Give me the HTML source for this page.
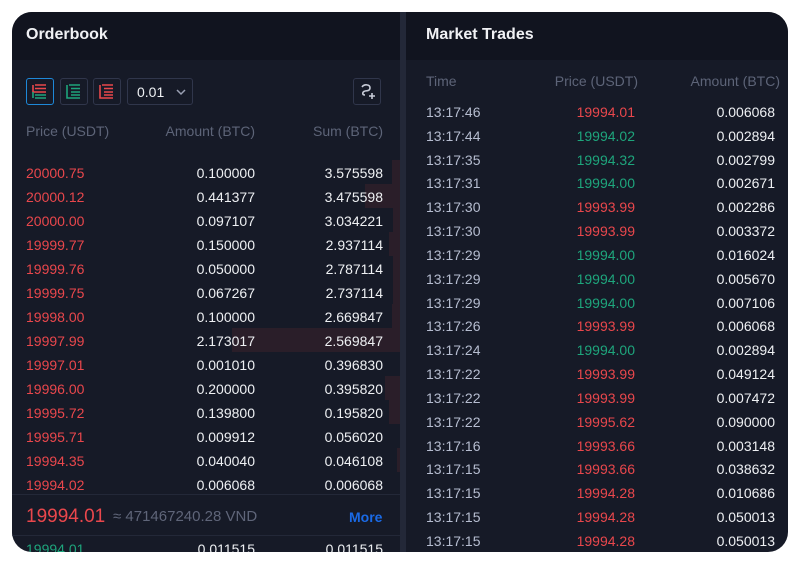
<!DOCTYPE html>
<html><head><meta charset="utf-8"><style>
*{margin:0;padding:0;box-sizing:border-box}
body{width:800px;height:564px;background:#fff;font-family:"Liberation Sans",Arial,sans-serif;position:relative;overflow:hidden}
.card{position:absolute;left:12px;top:12px;width:776px;height:540px;border-radius:20px;overflow:hidden;background:#161a27}
.hd{position:absolute;top:0;height:48px;background:#11141f;color:#f0f1f4;font-size:16px;font-weight:bold;line-height:46px}
.div{position:absolute;left:388px;top:0;width:6px;height:540px;background:#232838}
.t{position:absolute;font-size:14px;line-height:16px;white-space:nowrap;top:1px}
.r{color:#e9474c}.g{color:#1ea57c}.w{color:#eef0f3}.gr{color:#5d6478}.tm{color:#b6bdd0}
.bar{position:absolute;height:24px;background:#2a1e29}
.btn{position:absolute;top:66px;height:27px;border:1px solid #30364b;border-radius:3px}
</style></head><body>
<div class="card">
<div class="hd" style="left:0;width:388px;padding-left:14px">Orderbook</div>
<div class="hd" style="left:394px;width:382px;padding-left:20px">Market Trades</div>
<div class="div"></div>

<div class="btn" style="left:14px;width:28px;border-color:#1e88d8">
<svg width="26" height="25" viewBox="0 0 26 25"><g stroke-width="1.6"><path d="M6 6v7h13M8 6h11M8 9.5h11" stroke="#e9474c" fill="none"/><path d="M6 13v6M8 16h11M8 19h11" stroke="#1ea57c" fill="none"/></g></svg></div>
<div class="btn" style="left:48px;width:28px"><svg width="26" height="25" viewBox="0 0 26 25"><path d="M6 6v13h13M8 6h11M10 9.5h9M10 13h9M10 16h9" stroke="#1ea57c" stroke-width="1.6" fill="none"/></svg></div>
<div class="btn" style="left:81px;width:28px"><svg width="26" height="25" viewBox="0 0 26 25"><path d="M6 6v13h13M8 6h11M10 9.5h9M10 13h9M10 16h9" stroke="#e9474c" stroke-width="1.6" fill="none"/></svg></div>
<div class="btn" style="left:115px;width:66px"><span class="t w" style="left:9px;top:5px;font-size:14px">0.01</span><svg style="position:absolute;left:48px;top:9px" width="10" height="8" viewBox="0 0 10 8"><path d="M1 2l4 4 4-4" stroke="#9aa0b3" stroke-width="1.5" fill="none"/></svg></div>
<div class="btn" style="left:341px;width:28px"><svg width="26" height="25" viewBox="0 0 26 25"><path d="M8 8c2-3 8-3 8 1 0 3-4 3-5 3M11 12c-3 1-3 4 0 4" stroke="#c8ccd8" stroke-width="1.6" fill="none"/><path d="M15 17h6M18 14v6" stroke="#c8ccd8" stroke-width="1.6"/></svg></div>

<span class="t gr" style="left:14px;top:111px">Price (USDT)</span>
<span class="t gr" style="right:533px;top:111px">Amount (BTC)</span>
<span class="t gr" style="right:405px;top:111px">Sum (BTC)</span>

<div class="bar" style="left:380px;width:8px;top:148px"></div>
<div class="bar" style="left:353px;width:35px;top:172px"></div>
<div class="bar" style="left:381px;width:7px;top:196px"></div>
<div class="bar" style="left:377px;width:11px;top:220px"></div>
<div class="bar" style="left:381px;width:7px;top:244px"></div>
<div class="bar" style="left:381px;width:7px;top:268px"></div>
<div class="bar" style="left:380px;width:8px;top:292px"></div>
<div class="bar" style="left:220px;width:168px;top:316px"></div>
<div class="bar" style="left:373px;width:15px;top:364px"></div>
<div class="bar" style="left:377px;width:11px;top:388px"></div>
<div class="bar" style="left:385px;width:3px;top:436px"></div>

<div id="ob"></div>
<div style="position:absolute;left:0;top:482px;width:388px;height:42px;border-top:1px solid #232838;border-bottom:1px solid #232838;background:#161a27"></div>
<span class="t r" style="left:14px;top:495px;font-size:19px;line-height:20px">19994.01</span>
<span class="t gr" style="left:101px;top:497px;font-size:15px;color:#5f6579">≈ 471467240.28 VND</span>
<span class="t" style="left:337px;top:497px;color:#1a6ae6;font-weight:bold;font-size:14px">More</span>
<span class="t g" style="left:14px;top:529px">19994.01</span>
<span class="t w" style="right:533px;top:529px">0.011515</span>
<span class="t w" style="right:405px;top:529px">0.011515</span>

<span class="t gr" style="left:414px;top:61px">Time</span>
<span class="t gr" style="right:150px;top:61px">Price (USDT)</span>
<span class="t gr" style="right:8px;top:61px">Amount (BTC)</span>
<div id="mt"></div>
</div>
<script>
var ob=[["20000.75","0.100000","3.575598"],["20000.12","0.441377","3.475598"],["20000.00","0.097107","3.034221"],["19999.77","0.150000","2.937114"],["19999.76","0.050000","2.787114"],["19999.75","0.067267","2.737114"],["19998.00","0.100000","2.669847"],["19997.99","2.173017","2.569847"],["19997.01","0.001010","0.396830"],["19996.00","0.200000","0.395820"],["19995.72","0.139800","0.195820"],["19995.71","0.009912","0.056020"],["19994.35","0.040040","0.046108"],["19994.02","0.006068","0.006068"]];
var h="";ob.forEach(function(r,i){var y=153+i*24;h+='<span class="t r" style="left:14px;top:'+y+'px">'+r[0]+'</span><span class="t w" style="right:533px;top:'+y+'px">'+r[1]+'</span><span class="t w" style="right:405px;top:'+y+'px">'+r[2]+'</span>';});
document.getElementById("ob").outerHTML=h;
var mt=[["13:17:46","r","19994.01","0.006068"],["13:17:44","g","19994.02","0.002894"],["13:17:35","g","19994.32","0.002799"],["13:17:31","g","19994.00","0.002671"],["13:17:30","r","19993.99","0.002286"],["13:17:30","r","19993.99","0.003372"],["13:17:29","g","19994.00","0.016024"],["13:17:29","g","19994.00","0.005670"],["13:17:29","g","19994.00","0.007106"],["13:17:26","r","19993.99","0.006068"],["13:17:24","g","19994.00","0.002894"],["13:17:22","r","19993.99","0.049124"],["13:17:22","r","19993.99","0.007472"],["13:17:22","r","19995.62","0.090000"],["13:17:16","r","19993.66","0.003148"],["13:17:15","r","19993.66","0.038632"],["13:17:15","r","19994.28","0.010686"],["13:17:15","r","19994.28","0.050013"],["13:17:15","r","19994.28","0.050013"]];
h="";mt.forEach(function(r,i){var y=92+i*23.83;h+='<span class="t tm" style="left:414px;top:'+y+'px">'+r[0]+'</span><span class="t '+r[1]+'" style="right:153px;top:'+y+'px">'+r[2]+'</span><span class="t w" style="right:13px;top:'+y+'px">'+r[3]+'</span>';});
document.getElementById("mt").outerHTML=h;
</script>
</body></html>
